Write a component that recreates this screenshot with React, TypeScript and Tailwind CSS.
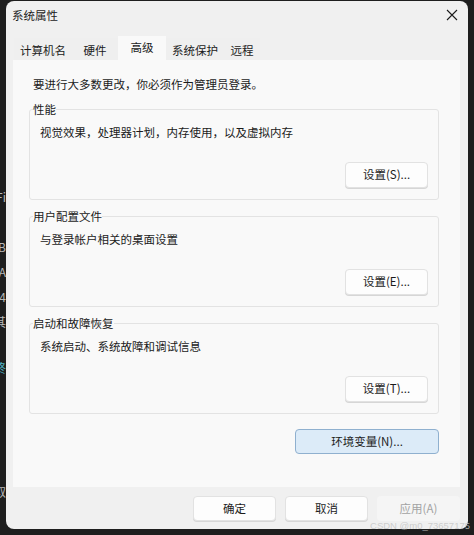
import React from "react";

const TABS = [
  { label: "计算机名", w: "w-[58px]" },
  { label: "硬件", w: "w-[46px]" },
  { label: "高级", w: "w-[48px]", active: true },
  { label: "系统保护", w: "w-[58px]" },
  { label: "远程", w: "w-[36px]" },
];

const GROUPS = [
  { title: "性能", desc: "视觉效果，处理器计划，内存使用，以及虚拟内存", btn: "设置(S)..." },
  { title: "用户配置文件", desc: "与登录帐户相关的桌面设置", btn: "设置(E)..." },
  { title: "启动和故障恢复", desc: "系统启动、系统故障和调试信息", btn: "设置(T)..." },
];

// 窗口后面露出来的一点文字碎片
const BEHIND = [
  { t: "Fi", mt: "mt-[188px]" },
  { t: "B", mt: "mt-[34px]" },
  { t: "A", mt: "mt-[9px]" },
  { t: "54", mt: "mt-[9px]" },
  { t: "其", mt: "mt-[9px]" },
  { t: "终", mt: "mt-[30px]", teal: true },
  { t: "取", mt: "mt-[108px]" },
];

function Btn({ children, disabled }: { children: React.ReactNode; disabled?: boolean }) {
  return (
    <button
      type="button"
      className={`flex h-[25px] w-[83px] items-center justify-center rounded-[4px] text-[11.5px] ${
        disabled
          ? "bg-[#f5f5f5] text-[#a3a3a3]"
          : "border border-[#e2e2e2] bg-[#fdfdfd] text-[#1b1b1b] shadow-[0_1px_0_#d6d6d6]"
      }`}
    >
      {children}
    </button>
  );
}

export default function App() {
  return (
    <div className="relative flex h-[535px] w-[474px] overflow-hidden bg-[#1e1e1e] pt-[1px] font-['Microsoft_YaHei_UI','Noto_Sans_CJK_SC',sans-serif] text-[#1b1b1b]">
      <div className="flex w-[6px] flex-col items-end overflow-hidden text-[12px] leading-[16px] text-[#b8b8b8]">
        {BEHIND.map((b, i) => (
          <span key={i} className={`${b.mt} whitespace-nowrap ${b.teal ? "text-[#4fb3c4]" : ""}`}>
            {b.t}
          </span>
        ))}
      </div>

      <div className="flex h-[528px] w-[462px] flex-col rounded-[8px] bg-[#f0f0f0]">
        {/* 标题栏 */}
        <div className="flex h-[28px] items-center justify-between pl-[6px] pr-[10px]">
          <span className="text-[11.5px] leading-[16px]">系统属性</span>
          <svg width="12" height="12" viewBox="0 0 12 12" fill="none" stroke="#1b1b1b" strokeWidth="1.1">
            <path d="M1 1l10 10M11 1L1 11" />
          </svg>
        </div>

        {/* 选项卡 */}
        <div className="mt-[7px] flex h-[24px] items-end pl-[8px]">
          {TABS.map((tab) =>
            tab.active ? (
              <div
                key={tab.label}
                className={`${tab.w} flex h-[24px] items-start justify-center bg-[#f9f9f9] pt-[3px] text-[11.5px] leading-[16px]`}
              >
                {tab.label}
              </div>
            ) : (
              <div
                key={tab.label}
                className={`${tab.w} flex h-[22px] items-start justify-center bg-[#efefef] pt-[4px] text-[11.5px] leading-[16px]`}
              >
                {tab.label}
              </div>
            )
          )}
        </div>

        {/* 内容面板 */}
        <div className="ml-[7px] mr-[8px] flex h-[427px] flex-col bg-[#f9f9f9] pl-[16px] pr-[21px] pt-[16px]">
          <p className="pl-[4px] text-[11.5px] leading-[16px]">要进行大多数更改，你必须作为管理员登录。</p>

          {GROUPS.map((g, i) => (
            <fieldset
              key={g.title}
              className={`${i === 0 ? "mt-[9px]" : "mt-[8px]"} flex flex-col rounded-[3px] border border-[#e3e3e3] px-[10px] pb-[11px]`}
            >
              <legend className="-ml-[7px] px-[0px] text-[11.5px] leading-[16px]">{g.title}</legend>
              <p className="mt-[7px] text-[11.5px] leading-[16px]">{g.desc}</p>
              <div className="mt-[22px] flex justify-end">
                <button
                  type="button"
                  className="flex h-[26px] w-[83px] items-center justify-center rounded-[4px] border border-[#e2e2e2] bg-[#fdfdfd] text-[11.5px] shadow-[0_1px_0_#d6d6d6]"
                >
                  {g.btn}
                </button>
              </div>
            </fieldset>
          ))}

          <div className="mt-[15px] flex justify-end">
            <button
              type="button"
              className="flex h-[25px] w-[144px] items-center justify-center rounded-[4px] border border-[#8fb0cf] bg-[#dcebf8] text-[11.5px]"
            >
              环境变量(N)...
            </button>
          </div>
        </div>

        {/* 底部按钮 */}
        <div className="flex justify-end gap-[9px] pr-[8px] pt-[9px]">
          <Btn>确定</Btn>
          <Btn>取消</Btn>
          <Btn disabled>应用(A)</Btn>
        </div>
      </div>

      <span className="absolute right-[4px] top-[519px] whitespace-nowrap font-['Liberation_Sans',sans-serif] text-[9.5px] leading-[13px] text-[#c4c4c4]/80">
        CSDN @m0_73657175
      </span>
    </div>
  );
}
